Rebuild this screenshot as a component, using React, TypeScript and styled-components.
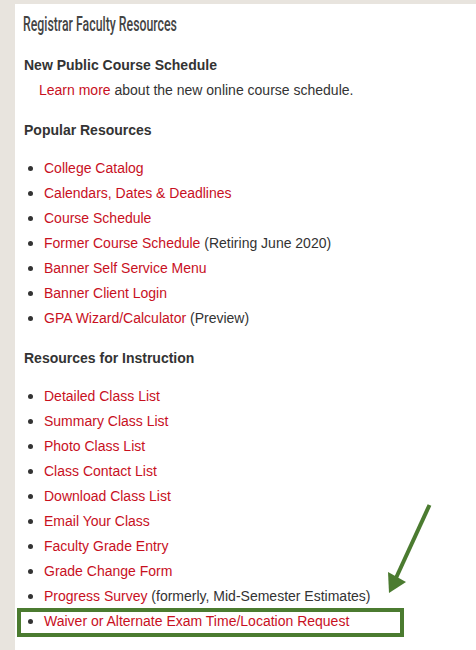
import React from "react";
import styled, { createGlobalStyle } from "styled-components";

const Global = createGlobalStyle`
  html, body { margin: 0; padding: 0; background: #e8e4de; }
  body { font-family: "Liberation Sans", Arial, Helvetica, sans-serif; }
`;

const Page = styled.div`
  position: relative;
  padding: 4px 0 0 15px;
  min-height: 650px;
  box-sizing: border-box;
`;

const Panel = styled.div`
  background: #ffffff;
  padding: 8px 8px 20px 8px;
  min-height: 646px;
  box-sizing: border-box;
  color: #333333;
  font-size: 14px;
  line-height: 25px;
`;

const Title = styled.h2`
  margin: 0;
  font-family: Roboto, "Liberation Sans", sans-serif;
  font-weight: 500;
  font-size: 20.5px;
  line-height: 25px;
  color: #444444;
  transform: scaleX(0.6);
  transform-origin: left center;
  white-space: nowrap;
`;

const Section = styled.section<{ $gap: number }>`
  margin-top: ${(p) => p.$gap}px;
`;

const Heading = styled.h3`
  margin: 0 0 13px 0;
  font-size: 14px;
  line-height: 25px;
  font-weight: bold;
  color: #333333;
  padding-left: 1px;
`;

const Para = styled.p`
  margin: -13px 0 0 0;
  padding-left: 16px;
`;

const Link = styled.a`
  color: #c8101e;
  text-decoration: none;
`;

const List = styled.ul`
  margin: 0;
  padding-left: 21px;
  list-style: none;
`;

const Item = styled.li<{ $highlight?: boolean }>`
  position: relative;
  line-height: 25px;
  &::before {
    content: "";
    display: inline-block;
    width: 5px;
    height: 5px;
    border-radius: 50%;
    background: #333333;
    margin-left: -16px;
    margin-right: 11px;
    vertical-align: middle;
    position: relative;
    top: -1px;
  }
  ${(p) =>
    p.$highlight
      ? `
    &::after {
      content: "";
      position: absolute;
      left: -27px;
      top: -1px;
      width: 387px;
      height: 29px;
      border: 4px solid #4b7b30;
      box-sizing: border-box;
      pointer-events: none;
    }
  `
      : ""}
`;

const Arrow = styled.svg`
  position: absolute;
  left: 0;
  top: 0;
  pointer-events: none;
`;

const popular: [string, string?][] = [
  ["College Catalog"],
  ["Calendars, Dates & Deadlines"],
  ["Course Schedule"],
  ["Former Course Schedule", "(Retiring June 2020)"],
  ["Banner Self Service Menu"],
  ["Banner Client Login"],
  ["GPA Wizard/Calculator", "(Preview)"],
];

const instruction: [string, string?][] = [
  ["Detailed Class List"],
  ["Summary Class List"],
  ["Photo Class List"],
  ["Class Contact List"],
  ["Download Class List"],
  ["Email Your Class"],
  ["Faculty Grade Entry"],
  ["Grade Change Form"],
  ["Progress Survey", "(formerly, Mid-Semester Estimates)"],
];

export default function App() {
  return (
    <Page>
      <Global />
      <Panel>
        <Title>Registrar Faculty Resources</Title>
        <Section $gap={16}>
          <Heading>New Public Course Schedule</Heading>
          <Para>
            <Link href="#">Learn more</Link> about the new online course schedule.
          </Para>
        </Section>
        <Section $gap={15}>
          <Heading>Popular Resources</Heading>
          <List>
            {popular.map(([l, n]) => (
              <Item key={l}>
                <Link href="#">{l}</Link>
                {n ? ` ${n}` : null}
              </Item>
            ))}
          </List>
        </Section>
        <Section $gap={15}>
          <Heading>Resources for Instruction</Heading>
          <List>
            {instruction.map(([l, n]) => (
              <Item key={l}>
                <Link href="#">{l}</Link>
                {n ? ` ${n}` : null}
              </Item>
            ))}
            <Item $highlight>
              <Link href="#">Waiver or Alternate Exam Time/Location Request</Link>
            </Item>
          </List>
        </Section>
      </Panel>
      <Arrow width="476" height="650" viewBox="0 0 476 650">
        <line x1="429.5" y1="505" x2="396" y2="578" stroke="#4b7b30" strokeWidth="4" />
        <polygon points="389,593 388,572 406,582" fill="#4b7b30" />
      </Arrow>
    </Page>
  );
}
